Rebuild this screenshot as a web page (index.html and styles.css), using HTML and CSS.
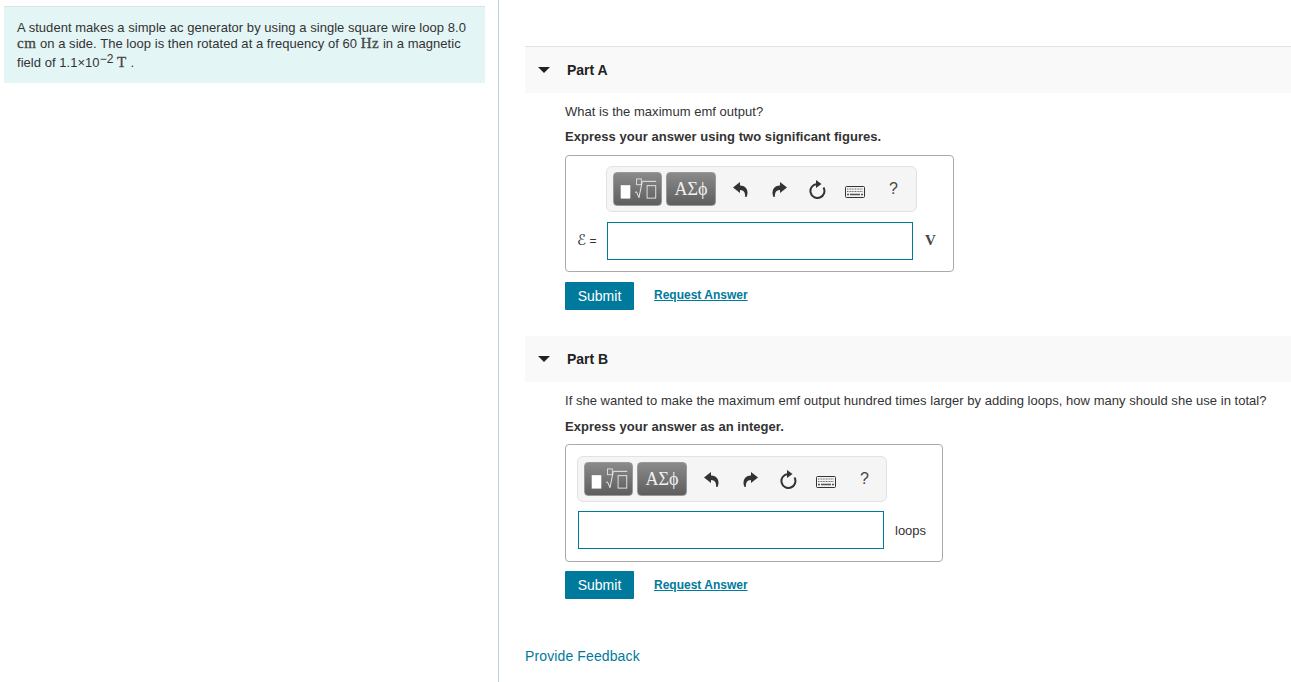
FILE: index.html
```html
<!DOCTYPE html>
<html lang="en">
<head>
<meta charset="utf-8">
<title>Part A and Part B</title>
<link rel="stylesheet" href="styles.css">
</head>
<body>
<svg class="defs" width="0" height="0" aria-hidden="true">
  <defs>
    <symbol id="tmpl" viewBox="0 0 49 34">
      <rect x="7" y="13" width="10" height="14" fill="#fff"/>
      <rect x="23.500" y="6.500" width="5" height="6" fill="none" stroke="#ddd"/>
      <path d="M22 20.500l1.500-.5 2.500 6 3.500-17H44" fill="none" stroke="#eee" stroke-width="1"/>
      <rect x="34.500" y="13.500" width="9" height="13" fill="none" stroke="#e4e4e4"/>
    </symbol>
    <symbol id="undo" viewBox="0 0 16 16">
      <path d="M7 1L0 6.500 7 12V9c2.500 0 4 1 4.700 3 .4 1.200.5 2.500.5 4h1.300c1.500-3 1.300-6.500-.2-8.500-1.300-1.800-3.300-3-6.300-3z" fill="#333"/>
    </symbol>
    <symbol id="redo" viewBox="0 0 16 16">
      <path d="M9 1l7 5.500L9 12V9c-2.500 0-4 1-4.700 3-.4 1.200-.5 2.500-.5 4H2.500C1 13 1.200 9.500 2.700 7.500 4 5.700 6 4.500 9 4.500z" fill="#333"/>
    </symbol>
    <symbol id="reset" viewBox="0 0 17 19">
      <path d="M14.500 7.500A7 7 0 1 1 8 4" fill="none" stroke="#333" stroke-width="2"/>
      <path d="M7 0l5.500 4L7 8z" fill="#333"/>
    </symbol>
    <symbol id="keys" viewBox="0 0 20 12">
      <rect x=".5" y=".5" width="19" height="11" rx="1" fill="#f4f4f4" stroke="#333"/>
      <path d="M2 3h16M2 5.500h16" stroke="#666" stroke-width="1.200" stroke-dasharray="1 .6"/>
      <path d="M2 8.500h2M5 8.500h10M16 8.500h2" stroke="#555" stroke-width="1.300"/>
    </symbol>
  </defs>
</svg>
<div class="page">
  <aside class="left">
    <div class="intro">
      <p>A student makes a simple ac generator by using a single square wire loop 8.0 <span class="unit">cm</span> on a side. The loop is then rotated at a frequency of 60 <span class="unit">Hz</span> in a magnetic field of 1.1×10<sup>−2</sup> <span class="unit">T</span> .</p>
    </div>
  </aside>
  <main class="right">
    <section class="part part-a">
      <h2 class="part-head"><span class="caret"></span>Part A</h2>
      <div class="part-body">
        <p class="q">What is the maximum emf output?</p>
        <p class="hint">Express your answer using two significant figures.</p>
        <div class="answer answer-a">
          <div class="toolbar toolbar-a">
            <span class="tbtn"><svg width="49" height="34"><use href="#tmpl"/></svg></span>
            <span class="tbtn greek">ΑΣϕ</span>
            <span class="tools">
              <svg class="i-undo" width="16" height="16"><use href="#undo"/></svg>
              <svg class="i-redo" width="16" height="16"><use href="#redo"/></svg>
              <svg class="i-reset" width="17" height="19"><use href="#reset"/></svg>
              <svg class="i-keys" width="20" height="12"><use href="#keys"/></svg>
              <span class="help">?</span>
            </span>
          </div>
          <div class="entry">
            <span class="var"><span class="script">ℰ</span> =</span>
            <span class="field"></span>
            <span class="suffix-unit">V</span>
          </div>
        </div>
        <div class="actions">
          <span class="submit">Submit</span>
          <a class="request" href="#">Request Answer</a>
        </div>
      </div>
    </section>
    <section class="part part-b">
      <h2 class="part-head"><span class="caret"></span>Part B</h2>
      <div class="part-body">
        <p class="q">If she wanted to make the maximum emf output hundred times larger by adding loops, how many should she use in total?</p>
        <p class="hint">Express your answer as an integer.</p>
        <div class="answer answer-b">
          <div class="toolbar toolbar-b">
            <span class="tbtn"><svg width="49" height="34"><use href="#tmpl"/></svg></span>
            <span class="tbtn greek">ΑΣϕ</span>
            <span class="tools">
              <svg class="i-undo" width="16" height="16"><use href="#undo"/></svg>
              <svg class="i-redo" width="16" height="16"><use href="#redo"/></svg>
              <svg class="i-reset" width="17" height="19"><use href="#reset"/></svg>
              <svg class="i-keys" width="20" height="12"><use href="#keys"/></svg>
              <span class="help">?</span>
            </span>
          </div>
          <div class="entry">
            <span class="field"></span>
            <span class="suffix-word">loops</span>
          </div>
        </div>
        <div class="actions">
          <span class="submit">Submit</span>
          <a class="request" href="#">Request Answer</a>
        </div>
      </div>
    </section>
    <a class="feedback" href="#">Provide Feedback</a>
  </main>
</div>
</body>
</html>
```
FILE: styles.css
```css
* { box-sizing: border-box; }
html, body { margin: 0; height: 100%; overflow: hidden; }
body { background: #fff; color: #333; font-family: "Liberation Sans", Arial, sans-serif; font-size: 13px; }
.defs { position: absolute; }
.page { display: flex; height: 682px; }

.left { width: 499px; flex: none; border-right: 1px solid #bfd0dc; padding: 6px 13px 0 4px; }
.intro { height: 77px; background: #e4f5f6; border-top: 1px solid #dbe3e8; padding: 13px 13px 0; }
.intro p { margin: 0; font-size: 13px; line-height: 16px; letter-spacing: .04px; }
.intro sup { font-size: 12px; line-height: 14px; vertical-align: 4px; }
.unit { font-family: "Liberation Serif", serif; font-size: 15px; line-height: 0; color: #444; letter-spacing: .5px; -webkit-text-stroke: .3px #444; }

.right { flex: 1; padding: 46px 0 0 26px; min-width: 0; }
.part-head { display: flex; align-items: center; margin: 0; height: 47px; background: #f9f9f9; font-size: 14px; font-weight: bold; color: #222; padding-left: 13px; }
.part-a .part-head { border-top: 1px solid #e3e3e3; }
.caret { width: 0; height: 0; border-left: 6px solid transparent; border-right: 6px solid transparent; border-top: 6px solid #222; margin-right: 17px; }
.part-body { padding-left: 40px; }
.q { margin: 0; padding-top: 11px; line-height: 15px; letter-spacing: .03px; }
.hint { margin: 0; padding-top: 10px; line-height: 15px; font-size: 13px; font-weight: bold; color: #333; letter-spacing: .04px; }

.answer { border: 1px solid #aaa; border-radius: 4px; margin-top: 11px; }
.answer-a { width: 389px; height: 117px; padding: 10px 0 0 40px; }
.answer-b { width: 378px; height: 118px; padding: 11px 0 0 11px; }
.toolbar { display: flex; align-items: center; width: 311px; height: 46px; background: #f5f5f5; border: 1px solid #e2e2e2; border-radius: 6px; padding: 0 0 0 6px; }
.toolbar-b { height: 46px; width: 310px; }
.tbtn { display: flex; align-items: center; justify-content: center; width: 49px; height: 34px; border: 1px solid #999; border-radius: 4px; background: linear-gradient(#8a8a8a, #5e5e5e); margin-right: 4px; }
.tbtn svg { display: block; }
.greek { width: 50px; font-family: "Liberation Serif", serif; font-size: 18px; color: #f0f0f0; }
.tools { position: relative; display: block; flex: 1; height: 44px; }
.tools svg { position: absolute; }
.i-undo { left: 13px; top: 14px; }
.i-redo { left: 51px; top: 14px; }
.i-reset { left: 89px; top: 13px; }
.i-keys { left: 125px; top: 19px; }
.help { position: absolute; left: 169px; top: 13px; font-size: 16px; line-height: 18px; color: #444; }

.entry { display: flex; align-items: center; }
.answer-a .entry { margin-top: 10px; margin-left: -40px; padding-left: 11px; }
.answer-b .entry { margin-top: 9px; margin-left: 1px; }
.var { width: 30px; flex: none; font-size: 12px; margin-bottom: 3px; }
.script { font-family: "DejaVu Sans", "Liberation Serif", serif; font-style: italic; font-size: 15px; }
.field { width: 306px; height: 38px; flex: none; background: #fff; border: 1px solid #007a9c; }
.suffix-unit { margin-left: 12px; margin-bottom: 2px; font-family: "Liberation Serif", serif; font-size: 15px; font-weight: bold; color: #444; }
.suffix-word { margin-left: 11px; margin-top: 1px; }

.actions { display: flex; align-items: center; margin-top: 10px; height: 28px; }
.answer-b + .actions { margin-top: 9px; }
.submit { display: flex; align-items: center; justify-content: center; width: 69px; height: 28px; background: #007a9c; color: #fff; font-size: 14px; border-radius: 1px; }
.request { margin-left: 20px; margin-bottom: 2px; color: #007a9c; font-weight: bold; font-size: 12px; text-decoration: underline; }
.answer-b + .actions .request { margin-bottom: 0; }

.part-b { padding-top: 26px; }
.part-b .q { padding-top: 11px; }
.part-b .hint { padding-top: 11px; }
.part-b .part-head { height: 46px; }
.part-b .answer { margin-top: 10px; }
.feedback { display: block; margin-top: 48px; color: #007a9c; font-size: 14px; line-height: 18px; text-decoration: none; letter-spacing: .12px; }
```
